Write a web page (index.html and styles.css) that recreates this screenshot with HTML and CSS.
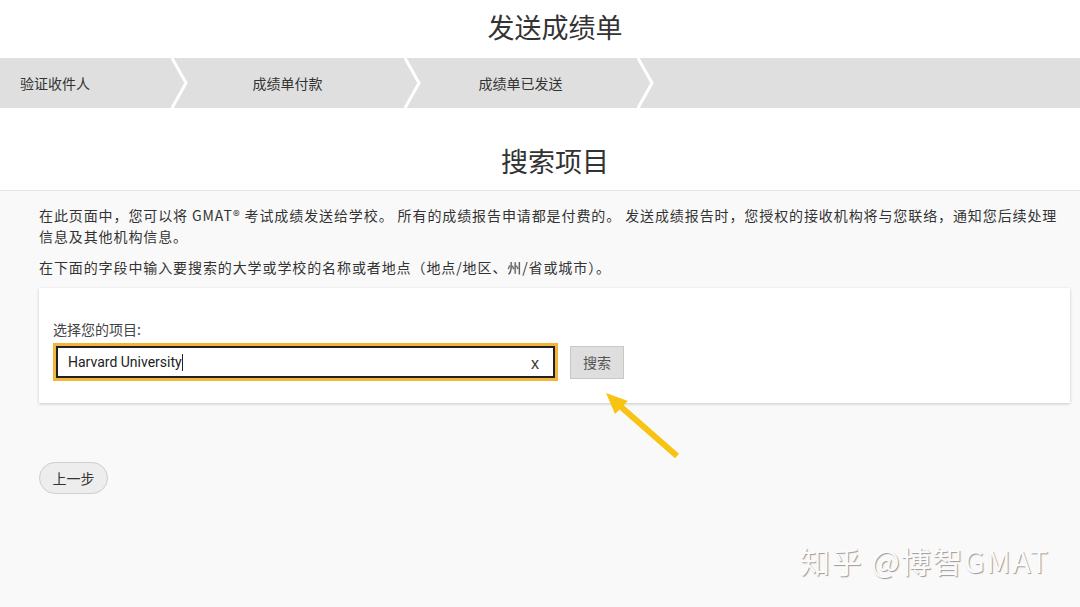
FILE: index.html
```html
<!DOCTYPE html>
<html lang="zh-CN">
<head>
    <meta charset="UTF-8">
    <meta name="viewport" content="width=device-width, initial-scale=1.0">
    <title>发送成绩单</title>
    <link rel="stylesheet" href="styles.css">
</head>
<body>
    <header class="page-title">发送成绩单</header>

    <nav class="steps">
        <div class="step step-first">验证收件人</div>
        <svg class="step-sep" viewBox="0 0 20 50" preserveAspectRatio="none"><polyline points="2,0 16,25 2,50" /></svg>
        <div class="step">成绩单付款</div>
        <svg class="step-sep" viewBox="0 0 20 50" preserveAspectRatio="none"><polyline points="2,0 16,25 2,50" /></svg>
        <div class="step">成绩单已发送</div>
        <svg class="step-sep" viewBox="0 0 20 50" preserveAspectRatio="none"><polyline points="2,0 16,25 2,50" /></svg>
        <div class="step step-last"></div>
    </nav>

    <div class="section-head">
        <h1>搜索项目</h1>
    </div>

    <main class="content">
        <p>在此页面中，您可以将 GMAT® 考试成绩发送给学校。 所有的成绩报告申请都是付费的。 发送成绩报告时，您授权的接收机构将与您联络，通知您后续处理信息及其他机构信息。</p>
        <p>在下面的字段中输入要搜索的大学或学校的名称或者地点（地点/地区、州/省或城市）。</p>

        <div class="card">
            <label class="field-label">选择您的项目:</label>
            <div class="search-row">
                <div class="search-box">
                    <span class="search-text">Harvard University<span class="caret"></span></span>
                    <span class="clear">x</span>
                </div>
                <button class="search-btn">搜索</button>
            </div>
        </div>

        <button class="back-btn">上一步</button>
    </main>

    <!-- annotation arrow -->
    <svg class="arrow" width="90" height="80" viewBox="0 0 90 80">
        <line x1="20" y1="21" x2="77" y2="71" />
        <polygon points="6,8 15,29 28,16" />
    </svg>

    <div class="watermark">知乎 @博智GMAT</div>
</body>
</html>
```

FILE: styles.css
```css
body {
    margin: 0;
    height: 607px;
    overflow: hidden;
    position: relative;
    background: #f9f9f9;
    color: #333;
    font-family: "Noto Sans CJK SC", "Noto Sans", sans-serif;
    font-size: 14px;
}

.page-title {
    background: #fff;
    height: 58px;
    line-height: 54px;
    text-align: center;
    padding-left: 30px;
    font-size: 27px;
    color: #333;
}

.steps {
    display: flex;
    height: 50px;
    background: #dfdfdf;
}

.step {
    width: 213px;
    display: flex;
    align-items: center;
    justify-content: center;
    padding-right: 18px;
    box-sizing: border-box;
    color: #333;
}

.step-first {
    width: 170px;
    justify-content: flex-start;
    padding-left: 20px;
}

.step-last {
    flex: 1;
}

.step-sep {
    width: 20px;
    height: 50px;
    flex-shrink: 0;
}

.step-sep polyline {
    fill: none;
    stroke: #fff;
    stroke-width: 3;
}

.section-head {
    background: #fff;
    height: 82px;
    border-bottom: 1px solid #e6e6e6;
}

.section-head h1 {
    margin: 0;
    padding: 33px 0 0 30px;
    text-align: center;
    font-size: 27px;
    font-weight: normal;
    line-height: 40px;
    color: #333;
}

.content {
    padding: 14px 10px 0 39px;
}

.content p {
    margin: 0 0 10px;
    line-height: 21px;
    letter-spacing: 0.9px;
}

.card {
    margin-top: 7px;
    background: #fff;
    padding: 31px 14px 22px;
    box-shadow: 0 1px 3px rgba(0, 0, 0, 0.2);
}

.field-label {
    display: block;
    line-height: 20px;
    margin-bottom: 4px;
    color: #444;
}

.search-row {
    display: flex;
    align-items: center;
}

.search-box {
    width: 499px;
    height: 32px;
    box-sizing: border-box;
    margin: 3px;
    border: 2px solid #222;
    outline: 3px solid #f3b43a;
    display: flex;
    align-items: center;
    justify-content: space-between;
    padding: 0 14px 0 10px;
    background: #fff;
}

.search-text {
    font-family: Roboto, "Noto Sans", sans-serif;
    font-size: 14px;
    color: #222;
}

.caret {
    display: inline-block;
    width: 1px;
    height: 17px;
    background: #222;
    vertical-align: -4px;
}

.clear {
    font-family: "Liberation Sans", sans-serif;
    font-size: 16px;
    color: #333;
    padding-top: 3px;
}

.search-btn {
    margin-left: 12px;
    width: 54px;
    height: 33px;
    background: #dedede;
    border: 1px solid #c8c8c8;
    color: #555;
    font-family: "Noto Sans CJK SC", sans-serif;
    font-size: 14px;
    padding: 0;
}

.back-btn {
    margin-top: 59px;
    width: 69px;
    height: 32px;
    border-radius: 16px;
    background: #ededed;
    border: 1px solid #cfcfcf;
    color: #333;
    font-family: "Noto Sans CJK SC", sans-serif;
    font-size: 14px;
    padding: 0;
}

.arrow {
    position: absolute;
    left: 600px;
    top: 385px;
}

.arrow line {
    stroke: #f8c312;
    stroke-width: 6;
}

.arrow polygon {
    fill: #f8c312;
}

.watermark {
    position: absolute;
    left: 800px;
    top: 538px;
    font-size: 30px;
    letter-spacing: 1.5px;
    color: #fbfbfb;
    text-shadow: 1px 1px 1px #9a9a9a;
    white-space: nowrap;
}
```
